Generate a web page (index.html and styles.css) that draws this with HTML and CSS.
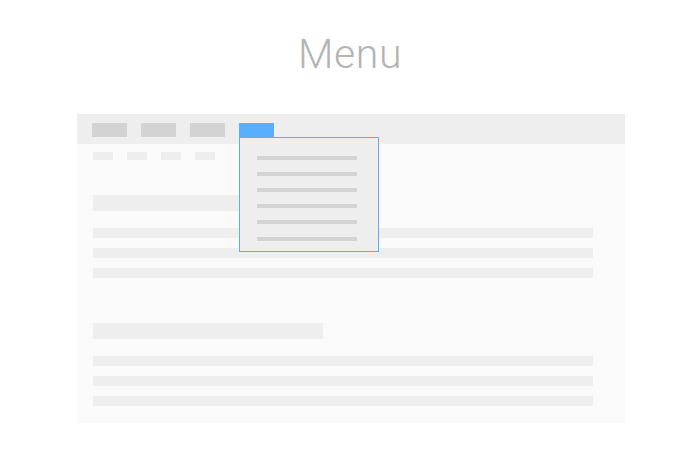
FILE: index.html
```html
<!DOCTYPE html>
<html>
<head>
<meta charset="utf-8">
<link rel="stylesheet" href="styles.css">
</head>
<body>
  <header class="title-wrap">
    <h1 class="title">Menu</h1>
  </header>
  <div class="frame">
    <div class="topbar">
      <div class="tab"></div>
      <div class="tab"></div>
      <div class="tab"></div>
      <div class="tab tab-active">
        <div class="dropdown">
          <div class="menu-line"></div>
          <div class="menu-line"></div>
          <div class="menu-line"></div>
          <div class="menu-line"></div>
          <div class="menu-line"></div>
          <div class="menu-line menu-line-last"></div>
        </div>
      </div>
    </div>
    <div class="content">
      <div class="subtabs">
        <div class="subtab"></div>
        <div class="subtab"></div>
        <div class="subtab"></div>
        <div class="subtab"></div>
      </div>
      <div class="section">
        <div class="heading"></div>
        <div class="lines">
          <div class="line"></div>
          <div class="line"></div>
          <div class="line"></div>
        </div>
      </div>
      <div class="section section-second">
        <div class="heading"></div>
        <div class="lines">
          <div class="line"></div>
          <div class="line"></div>
          <div class="line"></div>
        </div>
      </div>
    </div>
  </div>
</body>
</html>
```
FILE: styles.css
```css
html, body {
  margin: 0;
  padding: 0;
  background: #ffffff;
}
body {
  width: 700px;
  height: 460px;
  overflow: hidden;
  font-family: "Roboto", "Open Sans", sans-serif;
}
.title-wrap {
  height: 114px;
  display: flex;
  justify-content: center;
  box-sizing: border-box;
  padding-top: 30px;
}
.title {
  margin: 0;
  font-size: 41px;
  font-weight: 300;
  line-height: 48px;
  color: #b4b4b4;
  letter-spacing: 0.6px;
}
.frame {
  margin-left: 77px;
  width: 548px;
  height: 309px;
  background: #fafafa;
}
.topbar {
  height: 30px;
  background: #eeeeee;
  box-sizing: border-box;
  padding: 9px 0 0 15px;
  display: flex;
  gap: 14px;
}
.tab {
  width: 35px;
  height: 14px;
  background: #d3d3d3;
}
.tab-active {
  background: #5aaffc;
  position: relative;
}
.dropdown {
  position: absolute;
  top: 100%;
  left: 0;
  width: 140px;
  box-sizing: border-box;
  border: 1px solid #5aaffc;
  background: #eeeeee;
  padding: 18px 0 10px 17px;
  display: flex;
  flex-direction: column;
  gap: 12px;
  z-index: 2;
}
.menu-line {
  width: 100px;
  height: 4px;
  background: #d3d3d3;
}
.menu-line-last {
  margin-top: 1px;
}
.content {
  padding: 8px 0 0 16px;
}
.subtabs {
  display: flex;
  gap: 14px;
}
.subtab {
  width: 20px;
  height: 8px;
  background: #eeeeee;
}
.section {
  margin-top: 35px;
}
.section-second {
  margin-top: 45px;
}
.heading {
  width: 230px;
  height: 16px;
  background: #eeeeee;
}
.lines {
  margin-top: 17px;
  display: flex;
  flex-direction: column;
  gap: 10px;
}
.line {
  width: 500px;
  height: 10px;
  background: #eeeeee;
}
```
